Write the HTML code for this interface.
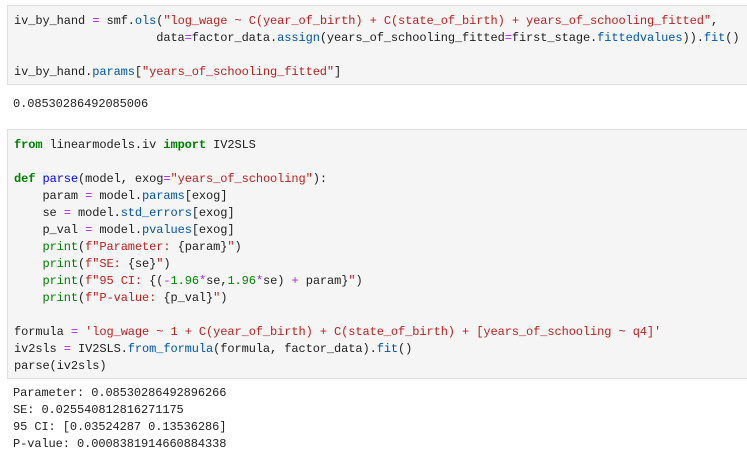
<!DOCTYPE html>
<html><head><style>
body{margin:0;background:#fff;width:747px;height:453px;overflow:hidden;font-family:"Liberation Mono",monospace;font-size:12px;letter-spacing:-0.09px;color:#212121}
.cell{position:absolute;left:7px;width:760px;background:#f5f5f5;border:1px solid #e0e0e0;box-sizing:border-box;padding:7px 0 0 6px}
pre{margin:0;font:inherit;line-height:17px;white-space:pre}
.out{position:absolute;left:13px}
.s{color:#ba2121}.k{color:#008000;font-weight:bold}.o{color:#aa22ff}.p{color:#0055aa}.f{color:#0000ff}.b{color:#008000}.n{color:#008800}
</style></head><body>
<div class="cell" style="top:5px;height:80px"><pre>iv_by_hand <span class="o">=</span> smf.<span class="p">ols</span>(<span class="s">"log_wage ~ C(year_of_birth) + C(state_of_birth) + years_of_schooling_fitted"</span>,
                    data<span class="o">=</span>factor_data.<span class="p">assign</span>(years_of_schooling_fitted<span class="o">=</span>first_stage.<span class="p">fittedvalues</span>)).<span class="p">fit</span>()

iv_by_hand.<span class="p">params</span>[<span class="s">"years_of_schooling_fitted"</span>]</pre></div>
<pre class="out" style="top:96px">0.08530286492085006</pre>
<div class="cell" style="top:129px;height:250px"><pre><span class="k">from</span> linearmodels.iv <span class="k">import</span> IV2SLS

<span class="k">def</span> <span class="f">parse</span>(model, exog<span class="o">=</span><span class="s">"years_of_schooling"</span>):
    param <span class="o">=</span> model.<span class="p">params</span>[exog]
    se <span class="o">=</span> model.<span class="p">std_errors</span>[exog]
    p_val <span class="o">=</span> model.<span class="p">pvalues</span>[exog]
    <span class="b">print</span>(<span class="s">f"Parameter: </span>{param}<span class="s">"</span>)
    <span class="b">print</span>(<span class="s">f"SE: </span>{se}<span class="s">"</span>)
    <span class="b">print</span>(<span class="s">f"95 CI: </span>{(<span class="o">-</span><span class="n">1.96</span><span class="o">*</span>se,<span class="n">1.96</span><span class="o">*</span>se) <span class="o">+</span> param}<span class="s">"</span>)
    <span class="b">print</span>(<span class="s">f"P-value: </span>{p_val}<span class="s">"</span>)

formula <span class="o">=</span> <span class="s">'log_wage ~ 1 + C(year_of_birth) + C(state_of_birth) + [years_of_schooling ~ q4]'</span>
iv2sls <span class="o">=</span> IV2SLS.<span class="p">from_formula</span>(formula, factor_data).<span class="p">fit</span>()
parse(iv2sls)</pre></div>
<pre class="out" style="top:385px">Parameter: 0.08530286492896266
SE: 0.025540812816271175
95 CI: [0.03524287 0.13536286]
P-value: 0.0008381914660884338</pre>
</body></html>
